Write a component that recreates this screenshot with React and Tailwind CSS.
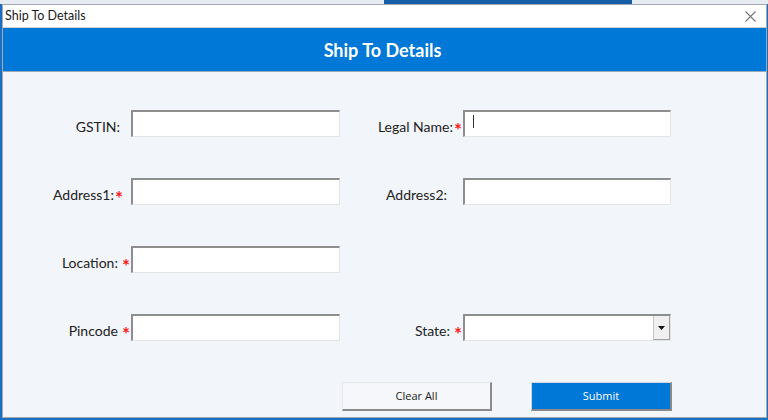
import React from "react";

const font = { fontFamily: "Lato, 'Open Sans', sans-serif" };

function Star({ gap }) {
    return (
        <span className={`text-[#ff1a1a] font-bold text-[19px] leading-none relative top-[3px] ${gap ? "ml-[4px]" : "ml-[1px]"}`}>
            *
        </span>
    );
}

function Field({ label, required, gap, pr, select, cursor }) {
    return (
        <>
            <div className="flex items-center justify-end pt-[5px] text-[14px] text-[#222]" style={{ paddingRight: pr }}>
                <span>{label}</span>
                {required && <Star gap={gap} />}
            </div>
            <div className="relative h-[27px] bg-white border-t-2 border-l-2 border-[#8e8e8e] border-r border-b border-r-[#e4e4e4] border-b-[#e4e4e4]">
                {cursor && <div className="absolute left-[8px] top-[3px] w-px h-[13px] bg-[#333]" />}
                {select && (
                    <div className="absolute right-0 top-0 bottom-0 w-[17px] bg-[#f0f0f0] border-l border-[#c8c8c8] border-r border-r-[#a0a0a0] border-b border-b-[#a0a0a0] flex items-center justify-center">
                        <svg width="7" height="4" viewBox="0 0 7 4">
                            <path d="M0 0h7L3.5 4z" fill="#111" />
                        </svg>
                    </div>
                )}
            </div>
        </>
    );
}

function Empty() {
    return (
        <>
            <div />
            <div />
        </>
    );
}

export default function App() {
    return (
        <div className="w-[768px] h-[420px] bg-[#1b6ec2] flex flex-col overflow-hidden" style={font}>
            {/* app behind the dialog */}
            <div className="h-[4px] bg-[#e7ecf2] flex shrink-0">
                <div className="w-[384px]" />
                <div className="w-[248px] bg-[#145ea8]" />
            </div>

            <div className="flex-1 ml-[2px] mr-[1px] mb-[2px] border border-[#a3aab2] flex flex-col">
                <div className="h-[23px] bg-white border-b border-[#cfcfcf] flex items-center justify-between pl-[2px] pr-[10px] shrink-0">
                    <span className="text-[12.5px] text-[#1a1a1a]">Ship To Details</span>
                    <svg width="11" height="11" viewBox="0 0 11 11">
                        <path d="M0.5 0.5l10 10M10.5 0.5l-10 10" stroke="#777" strokeWidth="1.1" />
                    </svg>
                </div>

                <div className="h-[44px] bg-[#0078d7] border-b border-[#9aa9b8] flex items-center justify-center shrink-0">
                    <span className="text-white font-bold text-[18px] relative top-[1px] left-[-2px]">Ship To Details</span>
                </div>

                <div className="flex-1 bg-[#f2f5fa] flex flex-col pt-[38px] gap-[41px]">
                    <div className="grid grid-cols-[128px_209px_123px_208px] h-[27px]">
                        <Field label="GSTIN:" pr={11} />
                        <Field label="Legal Name:" required pr={1} cursor />
                    </div>
                    <div className="grid grid-cols-[128px_209px_123px_208px] h-[27px]">
                        <Field label="Address1:" required pr={8} />
                        <Field label="Address2:" pr={16} />
                    </div>
                    <div className="grid grid-cols-[128px_209px_123px_208px] h-[27px]">
                        <Field label="Location:" required gap pr={1} />
                        <Empty />
                    </div>
                    <div className="grid grid-cols-[128px_209px_123px_208px] h-[27px]">
                        <Field label="Pincode" required gap pr={1} />
                        <Field label="State:" required gap pr={1} select />
                    </div>
                    <div className="flex h-[29px] pl-[339px] gap-[39px] text-[11px]" style={{ fontFamily: "'Open Sans', sans-serif" }}>
                        <button className="w-[150px] h-full bg-[#f5f7fa] border-t border-l border-[#e8e8e8] border-r-2 border-b-2 border-r-[#8a8a8a] border-b-[#8a8a8a] text-[#222]">
                            Clear All
                        </button>
                        <button className="w-[141px] h-full bg-[#0078d7] border-t border-l border-[#d0d8e0] border-r-2 border-b-2 border-r-[#8a8a8a] border-b-[#8a8a8a] text-white">
                            Submit
                        </button>
                    </div>
                </div>
            </div>
        </div>
    );
}
